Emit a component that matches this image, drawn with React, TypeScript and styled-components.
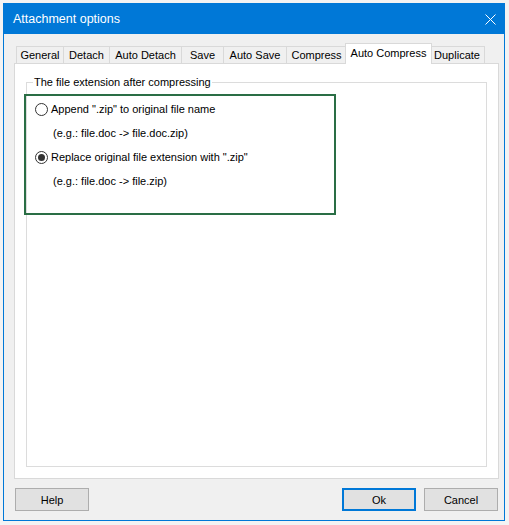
import React from "react";
import styled, { createGlobalStyle } from "styled-components";

const Global = createGlobalStyle`
  html, body { margin: 0; padding: 0; background: #f3f3f3; }
  body { font-family: "Liberation Sans", Arial, sans-serif; font-size: 11px; color: #000; }
  * { box-sizing: border-box; }
`;

const Page = styled.div`
  width: 509px;
  height: 525px;
  padding: 3px 0 0 3px;
`;

const Window = styled.div`
  position: relative;
  width: 502px;
  height: 518px;
  border: 1px solid #0078d7;
  background: #f0f0f0;
  display: flex;
  flex-direction: column;
`;

const TitleBar = styled.div`
  height: 30px;
  background: #0078d7;
  color: #fff;
  display: flex;
  align-items: center;
  justify-content: space-between;
  padding: 0 7px 0 9px;
  font-size: 12.5px;
`;

const Title = styled.span`
  line-height: 1;
  margin-top: 1px;
`;

const CloseBtn = styled.div`
  width: 14px;
  height: 14px;
  display: flex;
  align-items: center;
  justify-content: center;
`;

const Body = styled.div`
  flex: 1;
  display: flex;
  flex-direction: column;
  padding: 10px 5px 0 10px;
`;

const TabStrip = styled.div`
  display: flex;
  align-items: flex-end;
  height: 20px;
  padding-left: 2px;
  position: relative;
  z-index: 1;
  margin-bottom: -1px;
`;

const Tab = styled.div<{ $active?: boolean; $w: number }>`
  width: ${(p) => p.$w}px;
  height: ${(p) => (p.$active ? "21px" : "18px")};
  padding-bottom: ${(p) => (p.$active ? "3px" : "0")};
  margin: ${(p) => (p.$active ? "0 -2px" : "0")};
  background: ${(p) => (p.$active ? "#fff" : "#f0f0f0")};
  border: 1px solid #d9d9d9;
  border-bottom: ${(p) => (p.$active ? "none" : "1px solid #d9d9d9")};
  border-left: ${(p) => (p.$active ? "1px solid #d9d9d9" : "none")};
  position: relative;
  z-index: ${(p) => (p.$active ? 2 : 1)};
  display: flex;
  align-items: center;
  justify-content: center;
  white-space: nowrap;
  flex: none;
  &:first-child { border-left: 1px solid #d9d9d9; }
`;

const Panel = styled.div`
  width: 485px;
  height: 416px;
  background: #fff;
  border: 1px solid #d9d9d9;
  padding: 10px 11px 11px 11px;
  display: flex;
`;

const Group = styled.fieldset`
  flex: 1;
  margin: 0;
  border: 1px solid #dcdcdc;
  padding: 7px 8px 0 8px;
  min-width: 0;
`;

const Legend = styled.legend`
  padding: 0 1px;
  margin-left: -2px;
  line-height: 16px;
`;

const OptionRow = styled.label`
  display: flex;
  align-items: center;
  height: 24px;
  gap: 3px;
`;

const Radio = styled.span<{ $checked?: boolean }>`
  width: 13px;
  height: 13px;
  border: 1px solid #333;
  border-radius: 50%;
  background: #fff;
  display: flex;
  align-items: center;
  justify-content: center;
  flex: none;
  &::after {
    content: "";
    width: 7px;
    height: 7px;
    border-radius: 50%;
    background: ${(p) => (p.$checked ? "#333" : "transparent")};
  }
`;

const Example = styled.div`
  height: 24px;
  display: flex;
  align-items: center;
  padding-left: 18px;
`;

const Footer = styled.div`
  display: flex;
  align-items: center;
  height: 41px;
  padding: 0 1px 0 1px;
  gap: 8px;
`;

const Button = styled.button<{ $default?: boolean }>`
  width: 74px;
  height: 23px;
  font-family: inherit;
  font-size: 11px;
  color: #000;
  background: #e1e1e1;
  border: ${(p) => (p.$default ? "2px solid #0078d7" : "1px solid #adadad")};
  padding: 0;
`;

const Spacer = styled.div`
  flex: 1;
`;

const Highlight = styled.div`
  position: absolute;
  left: 20px;
  top: 90px;
  width: 312px;
  height: 121px;
  border: 2px solid #2a6e45;
  pointer-events: none;
`;

const tabs: { label: string; w: number }[] = [
  { label: "General", w: 48 },
  { label: "Detach", w: 46 },
  { label: "Auto Detach", w: 72 },
  { label: "Save", w: 42 },
  { label: "Auto Save", w: 63 },
  { label: "Compress", w: 60 },
  { label: "Auto Compress", w: 87 },
  { label: "Duplicate", w: 55 },
];

export default function App() {
  return (
    <Page>
      <Global />
      <Window>
        <TitleBar>
          <Title>Attachment options</Title>
          <CloseBtn>
            <svg width="11" height="11" viewBox="0 0 11 11">
              <path d="M0.5 0.5 L10.5 10.5 M10.5 0.5 L0.5 10.5" stroke="#fff" strokeWidth="1" />
            </svg>
          </CloseBtn>
        </TitleBar>
        <Body>
          <TabStrip>
            {tabs.map((t) => (
              <Tab key={t.label} $w={t.w} $active={t.label === "Auto Compress"}>
                {t.label}
              </Tab>
            ))}
          </TabStrip>
          <Panel>
            <Group>
              <Legend>The file extension after compressing</Legend>
              <OptionRow>
                <Radio />
                <span>Append ".zip" to original file name</span>
              </OptionRow>
              <Example>(e.g.: file.doc -&gt; file.doc.zip)</Example>
              <OptionRow>
                <Radio $checked />
                <span>Replace original file extension with ".zip"</span>
              </OptionRow>
              <Example>(e.g.: file.doc -&gt; file.zip)</Example>
            </Group>
          </Panel>
          <Footer>
            <Button>Help</Button>
            <Spacer />
            <Button $default>Ok</Button>
            <Button>Cancel</Button>
          </Footer>
        </Body>
        <Highlight />
      </Window>
    </Page>
  );
}
